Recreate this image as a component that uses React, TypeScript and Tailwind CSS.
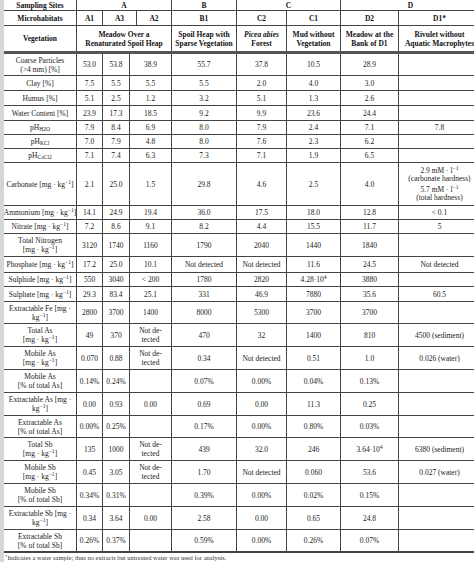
import React from 'react';

const bodyCols = ['w-[26px]', 'w-[27px]', 'w-[42px]', 'w-[65px]', 'w-[50px]', 'w-[54px]', 'w-[58px]', 'w-[81px]'];

const line = 'border-[#444]';

const kg = (
  <>
    [mg · kg<sup>−1</sup>]
  </>
);

type Row = { label: React.ReactNode; h: string; v: React.ReactNode[]; last?: boolean };

const nd = (
  <>
    Not de-
    <br />
    tected
  </>
);

const rows: Row[] = [
  { label: <>Coarse Particles<br />(&gt;4 mm) [%]</>, h: 'h-[22px]', v: ['53.0', '53.8', '38.9', '55.7', '37.8', '10.5', '28.9', ''] },
  { label: 'Clay [%]', h: 'h-[15px]', v: ['7.5', '5.5', '5.5', '5.5', '2.0', '4.0', '3.0', ''] },
  { label: 'Humus [%]', h: 'h-[15px]', v: ['5.1', '2.5', '1.2', '3.2', '5.1', '1.3', '2.6', ''] },
  { label: 'Water Content [%]', h: 'h-[15px]', v: ['23.9', '17.3', '18.5', '9.2', '9.9', '23.6', '24.4', ''] },
  { label: <>pH<sub>H2O</sub></>, h: 'h-[14px]', v: ['7.9', '8.4', '6.9', '8.0', '7.9', '2.4', '7.1', '7.8'] },
  { label: <>pH<sub>KCl</sub></>, h: 'h-[14px]', v: ['7.0', '7.9', '4.8', '8.0', '7.6', '2.3', '6.2', ''] },
  { label: <>pH<sub>CaCl2</sub></>, h: 'h-[14px]', v: ['7.1', '7.4', '6.3', '7.3', '7.1', '1.9', '6.5', ''] },
  {
    label: <>Carbonate {kg}</>,
    h: 'h-[43px]',
    v: [
      '2.1', '25.0', '1.5', '29.8', '4.6', '2.5', '4.0',
      <div className="leading-[8px]">
        <div>2.9 mM · l<sup>−1</sup></div>
        <div>(carbonate hardness)</div>
        <div className="mt-[3px]">5.7 mM · l<sup>−1</sup></div>
        <div>(total hardness)</div>
      </div>,
    ],
  },
  { label: <>Ammonium {kg}</>, h: 'h-[14px]', v: ['14.1', '24.9', '19.4', '36.0', '17.5', '18.0', '12.8', '< 0.1'] },
  { label: <>Nitrate {kg}</>, h: 'h-[14px]', v: ['7.2', '8.6', '9.1', '8.2', '4.4', '15.5', '11.7', '5'] },
  { label: <>Total Nitrogen<br />{kg}</>, h: 'h-[23px]', v: ['3120', '1740', '1160', '1790', '2040', '1440', '1840', ''] },
  { label: <>Phosphate {kg}</>, h: 'h-[16px]', v: ['17.2', '25.0', '10.1', 'Not detected', 'Not detected', '11.6', '24.5', 'Not detected'] },
  { label: <>Sulphide {kg}</>, h: 'h-[14px]', v: ['550', '3040', '< 200', '1780', '2820', <>4.28·10<sup>4</sup></>, '3880', ''] },
  { label: <>Sulphate {kg}</>, h: 'h-[15px]', v: ['29.3', '83.4', '25.1', '331', '46.9', '7880', '35.6', '60.5'] },
  { label: <>Extractable Fe [mg ·<br />kg<sup>−1</sup>]</>, h: 'h-[22px]', v: ['2800', '3700', '1400', '8000', '5300', '3700', '3700', ''] },
  { label: <>Total As<br />{kg}</>, h: 'h-[23px]', v: ['49', '370', nd, '470', '32', '1400', '810', '4500 (sediment)'] },
  { label: <>Mobile As<br />{kg}</>, h: 'h-[23px]', v: ['0.070', '0.88', nd, '0.34', 'Not detected', '0.51', '1.0', '0.026 (water)'] },
  { label: <>Mobile As<br />[% of total As]</>, h: 'h-[23px]', v: ['0.14%', '0.24%', '', '0.07%', '0.00%', '0.04%', '0.13%', ''] },
  { label: <>Extractable As [mg ·<br />kg<sup>−1</sup>]</>, h: 'h-[23px]', v: ['0.00', '0.93', '0.00', '0.69', '0.00', '11.3', '0.25', ''] },
  { label: <>Extractable As<br />[% of total As]</>, h: 'h-[22px]', v: ['0.00%', '0.25%', '', '0.17%', '0.00%', '0.80%', '0.03%', ''] },
  { label: <>Total Sb<br />{kg}</>, h: 'h-[23px]', v: ['135', '1000', nd, '439', '32.0', '246', <>3.64·10<sup>4</sup></>, '6380 (sediment)'] },
  { label: <>Mobile Sb<br />{kg}</>, h: 'h-[23px]', v: ['0.45', '3.05', nd, '1.70', 'Not detected', '0.060', '53.6', '0.027 (water)'] },
  { label: <>Mobile Sb<br />[% of total Sb]</>, h: 'h-[23px]', v: ['0.34%', '0.31%', '', '0.39%', '0.00%', '0.02%', '0.15%', ''] },
  { label: <>Extractable Sb [mg ·<br />kg<sup>−1</sup>]</>, h: 'h-[23px]', v: ['0.34', '3.64', '0.00', '2.58', '0.00', '0.65', '24.8', ''] },
  { label: <>Extractable Sb<br />[% of total Sb]</>, h: 'h-[23px]', v: ['0.26%', '0.37%', '', '0.59%', '0.00%', '0.26%', '0.07%', ''], last: true },
];

function Cell({ w, children, bold, edge }: { w: string; children?: React.ReactNode; bold?: boolean; edge?: boolean }) {
  return (
    <div
      className={`${w} shrink-0 h-full flex items-center justify-center text-center leading-[9px] whitespace-nowrap ${
        edge ? '' : `border-r ${line}`
      } ${bold ? 'font-bold text-[#111]' : ''}`}
    >
      <div>{children}</div>
    </div>
  );
}

export default function App() {
  return (
    <div
      className="w-[474px] h-[562px] overflow-hidden bg-white flex text-[7.5px] text-[#222]"
      style={{ fontFamily: '"Liberation Serif", "Times New Roman", serif' }}
    >
      <div className="w-[4px] shrink-0 bg-[#d6d6d6]" />
      <div className="w-[476px] shrink-0 flex flex-col">
        {/* Header */}
        <div className={`flex h-[11px] border-b ${line}`}>
          <Cell w="w-[73px]" bold>Sampling Sites</Cell>
          <Cell w="w-[95px]" bold>A</Cell>
          <Cell w="w-[65px]" bold>B</Cell>
          <Cell w="w-[104px]" bold>C</Cell>
          <Cell w="w-[139px]" bold edge>D</Cell>
        </div>
        <div className={`flex h-[15px] border-b ${line}`}>
          <Cell w="w-[73px]" bold>Microhabitats</Cell>
          <Cell w="w-[26px]" bold>A1</Cell>
          <Cell w="w-[34px]" bold>A3</Cell>
          <Cell w="w-[35px]" bold>A2</Cell>
          <Cell w="w-[65px]" bold>B1</Cell>
          <Cell w="w-[50px]" bold>C2</Cell>
          <Cell w="w-[54px]" bold>C1</Cell>
          <Cell w="w-[58px]" bold>D2</Cell>
          <Cell w="w-[81px]" bold edge>D1*</Cell>
        </div>
        <div className="flex h-[28px] border-b-[3px] border-[#555]">
          <Cell w="w-[73px]" bold>Vegetation</Cell>
          <Cell w="w-[95px]" bold>Meadow Over a<br />Renaturated Spoil Heap</Cell>
          <Cell w="w-[65px]" bold>Spoil Heap with<br />Sparse Vegetation</Cell>
          <Cell w="w-[50px]" bold><i>Picea abies</i><br />Forest</Cell>
          <Cell w="w-[54px]" bold>Mud without<br />Vegetation</Cell>
          <Cell w="w-[58px]" bold>Meadow at the<br />Bank of D1</Cell>
          <Cell w="w-[81px]" bold edge>Rivulet without<br />Aquatic Macrophytes</Cell>
        </div>

        {/* Data rows */}
        {rows.map((r, i) => (
          <div
            key={i}
            className={`flex ${r.h} ${r.last ? 'border-b-2 border-[#444]' : `border-b ${line}`}`}
          >
            <Cell w="w-[73px]">{r.label}</Cell>
            {r.v.map((val, j) => (
              <Cell key={j} w={bodyCols[j]} edge={j === 7}>
                {val}
              </Cell>
            ))}
          </div>
        ))}

        <p className="text-[6.5px] leading-[9px] text-[#333] pl-[1px] whitespace-nowrap">
          <sup>*</sup>Indicates a water sample; thus no extracts but untreated water was used for analysis.
        </p>
      </div>
    </div>
  );
}
